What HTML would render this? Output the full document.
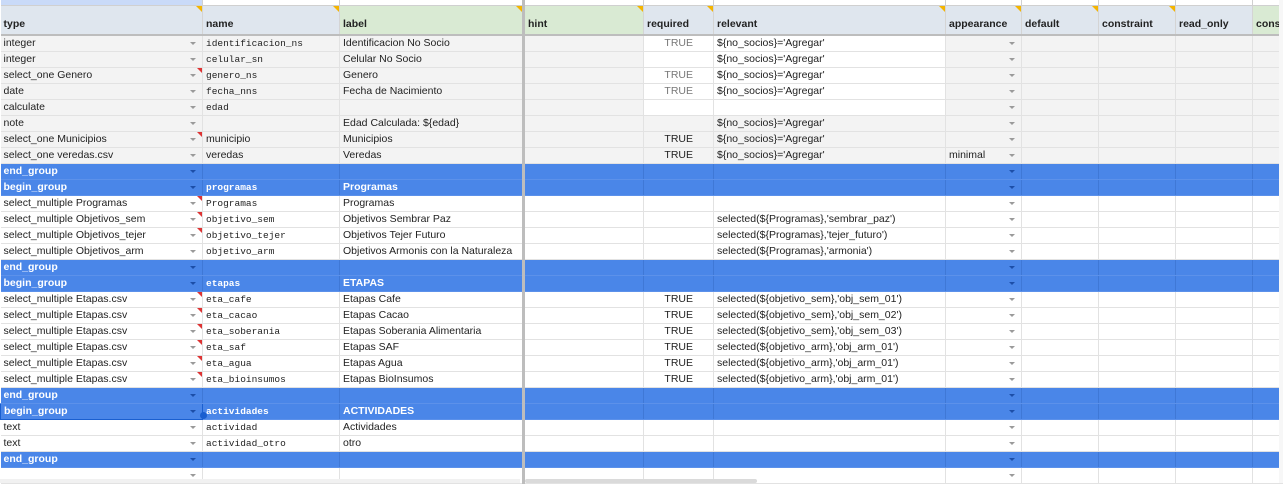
<!DOCTYPE html>
<html><head><meta charset="utf-8"><style>
*{margin:0;padding:0;box-sizing:border-box}
body{width:1283px;height:483px;overflow:hidden;background:#fff;font-family:"Liberation Sans",Arial,sans-serif;font-size:10.5px;color:#222;position:relative}
table{border-collapse:collapse;table-layout:fixed;position:absolute;left:0;top:0;width:1290px}
td{height:16px;border-right:1px solid #e2e2e2;border-bottom:1px solid #e2e2e2;padding:0 3px;white-space:nowrap;overflow:hidden;position:relative;line-height:15px;vertical-align:bottom}
tr.top td{height:5px;border-bottom:1px solid #d0d0d0;border-right:1px solid #d0d0d0}
tr.hd td{height:30px;font-weight:bold;background:#dfe6ee;padding-bottom:2px;border-bottom:2px solid #bdbdbd;border-right:1px solid #d4d4d4}
tr.hd td.g{background:#d9ead3}
tr.g td{background:#f3f3f3}
tr.g td.w{background:#fff}
tr.b td{background:#4a86e8;color:#fff;font-weight:bold;border-right:1px solid #3f78d6;border-bottom:1px solid #5c91ea}
td.dv{border-right:3px solid #bdbdbd!important}
.m{font-family:"Liberation Mono",monospace;font-size:9.5px}
tr.b .m{font-weight:bold}
.ar::after{content:"";position:absolute;right:6px;top:6px;border-left:3px solid transparent;border-right:3px solid transparent;border-top:3px solid #9a9a9a}
tr.b .ar::after{border-top-color:#1c4ea8}
.rc::before{content:"";position:absolute;right:0;top:0;border-top:5px solid #d33;border-left:5px solid transparent}
.oc::before{content:"";position:absolute;right:0;top:0;border-top:6px solid #f4b400;border-left:6px solid transparent}
.r{text-align:right;padding-right:20px}
.gr{color:#777}
</style></head><body>
<table>
<colgroup><col style="width:202px"><col style="width:137px"><col style="width:184px"><col style="width:120px"><col style="width:70px"><col style="width:232px"><col style="width:76px"><col style="width:77px"><col style="width:77px"><col style="width:77px"><col style="width:38px"></colgroup>
<tr class="top"><td style="background:#c9daf8"></td><td></td><td class="dv"></td><td></td><td></td><td></td><td></td><td></td><td></td><td></td><td></td></tr>
<tr class="hd"><td class="oc">type</td><td class="oc">name</td><td class="g dv oc">label</td><td class="g oc">hint</td><td class="oc">required</td><td class="oc">relevant</td><td class="oc">appearance</td><td class="oc">default</td><td class="oc">constraint</td><td>read_only</td><td class="g">const</td></tr>
<tr class="g"><td class="ar">integer</td><td class="m">identificacion_ns</td><td class="dv">Identificacion No Socio</td><td></td><td class="w r gr">TRUE</td><td class="w">${no_socios}='Agregar'</td><td class="ar"></td><td></td><td></td><td></td><td></td></tr>
<tr class="g"><td class="ar">integer</td><td class="m">celular_sn</td><td class="dv">Celular No Socio</td><td></td><td class="w"></td><td class="w">${no_socios}='Agregar'</td><td class="ar"></td><td></td><td></td><td></td><td></td></tr>
<tr class="g"><td class="ar rc">select_one Genero</td><td class="m">genero_ns</td><td class="dv">Genero</td><td></td><td class="w r gr">TRUE</td><td class="w">${no_socios}='Agregar'</td><td class="ar"></td><td></td><td></td><td></td><td></td></tr>
<tr class="g"><td class="ar">date</td><td class="m">fecha_nns</td><td class="dv">Fecha de Nacimiento</td><td></td><td class="w r gr">TRUE</td><td class="w">${no_socios}='Agregar'</td><td class="ar"></td><td></td><td></td><td></td><td></td></tr>
<tr class="g"><td class="ar">calculate</td><td class="m">edad</td><td class="dv"></td><td></td><td class="w"></td><td class="w"></td><td class="ar"></td><td></td><td></td><td></td><td></td></tr>
<tr class="g"><td class="ar">note</td><td></td><td class="dv">Edad Calculada: ${edad}</td><td></td><td></td><td>${no_socios}='Agregar'</td><td class="ar"></td><td></td><td></td><td></td><td></td></tr>
<tr class="g"><td class="ar rc">select_one Municipios</td><td>municipio</td><td class="dv">Municipios</td><td></td><td class="r">TRUE</td><td>${no_socios}='Agregar'</td><td class="ar"></td><td></td><td></td><td></td><td></td></tr>
<tr class="g"><td class="ar">select_one veredas.csv</td><td>veredas</td><td class="dv">Veredas</td><td></td><td class="r">TRUE</td><td>${no_socios}='Agregar'</td><td class="ar">minimal</td><td></td><td></td><td></td><td></td></tr>
<tr class="b"><td class="ar">end_group</td><td></td><td class="dv"></td><td></td><td></td><td></td><td class="ar"></td><td></td><td></td><td></td><td></td></tr>
<tr class="b"><td class="ar">begin_group</td><td class="m">programas</td><td class="dv">Programas</td><td></td><td></td><td></td><td class="ar"></td><td></td><td></td><td></td><td></td></tr>
<tr><td class="ar rc">select_multiple Programas</td><td class="m">Programas</td><td class="dv">Programas</td><td></td><td></td><td></td><td class="ar"></td><td></td><td></td><td></td><td></td></tr>
<tr><td class="ar rc">select_multiple Objetivos_sem</td><td class="m">objetivo_sem</td><td class="dv">Objetivos Sembrar Paz</td><td></td><td></td><td>selected(${Programas},'sembrar_paz')</td><td class="ar"></td><td></td><td></td><td></td><td></td></tr>
<tr><td class="ar rc">select_multiple Objetivos_tejer</td><td class="m">objetivo_tejer</td><td class="dv">Objetivos Tejer Futuro</td><td></td><td></td><td>selected(${Programas},'tejer_futuro')</td><td class="ar"></td><td></td><td></td><td></td><td></td></tr>
<tr><td class="ar">select_multiple Objetivos_arm</td><td class="m">objetivo_arm</td><td class="dv">Objetivos Armonis con la Naturaleza</td><td></td><td></td><td>selected(${Programas},'armonia')</td><td class="ar"></td><td></td><td></td><td></td><td></td></tr>
<tr class="b"><td class="ar">end_group</td><td></td><td class="dv"></td><td></td><td></td><td></td><td class="ar"></td><td></td><td></td><td></td><td></td></tr>
<tr class="b"><td class="ar">begin_group</td><td class="m">etapas</td><td class="dv">ETAPAS</td><td></td><td></td><td></td><td class="ar"></td><td></td><td></td><td></td><td></td></tr>
<tr><td class="ar rc">select_multiple Etapas.csv</td><td class="m">eta_cafe</td><td class="dv">Etapas Cafe</td><td></td><td class="r">TRUE</td><td>selected(${objetivo_sem},'obj_sem_01')</td><td class="ar"></td><td></td><td></td><td></td><td></td></tr>
<tr><td class="ar rc">select_multiple Etapas.csv</td><td class="m">eta_cacao</td><td class="dv">Etapas Cacao</td><td></td><td class="r">TRUE</td><td>selected(${objetivo_sem},'obj_sem_02')</td><td class="ar"></td><td></td><td></td><td></td><td></td></tr>
<tr><td class="ar rc">select_multiple Etapas.csv</td><td class="m">eta_soberania</td><td class="dv">Etapas Soberania Alimentaria</td><td></td><td class="r">TRUE</td><td>selected(${objetivo_sem},'obj_sem_03')</td><td class="ar"></td><td></td><td></td><td></td><td></td></tr>
<tr><td class="ar rc">select_multiple Etapas.csv</td><td class="m">eta_saf</td><td class="dv">Etapas SAF</td><td></td><td class="r">TRUE</td><td>selected(${objetivo_arm},'obj_arm_01')</td><td class="ar"></td><td></td><td></td><td></td><td></td></tr>
<tr><td class="ar rc">select_multiple Etapas.csv</td><td class="m">eta_agua</td><td class="dv">Etapas Agua</td><td></td><td class="r">TRUE</td><td>selected(${objetivo_arm},'obj_arm_01')</td><td class="ar"></td><td></td><td></td><td></td><td></td></tr>
<tr><td class="ar rc">select_multiple Etapas.csv</td><td class="m">eta_bioinsumos</td><td class="dv">Etapas BioInsumos</td><td></td><td class="r">TRUE</td><td>selected(${objetivo_arm},'obj_arm_01')</td><td class="ar"></td><td></td><td></td><td></td><td></td></tr>
<tr class="b"><td class="ar">end_group</td><td></td><td class="dv"></td><td></td><td></td><td></td><td class="ar"></td><td></td><td></td><td></td><td></td></tr>
<tr class="b"><td class="ar" style="border:1px solid #1a5fd0">begin_group</td><td class="m">actividades</td><td class="dv">ACTIVIDADES</td><td></td><td></td><td></td><td class="ar"></td><td></td><td></td><td></td><td></td></tr>
<tr><td class="ar">text</td><td class="m">actividad</td><td class="dv">Actividades</td><td></td><td></td><td></td><td class="ar"></td><td></td><td></td><td></td><td></td></tr>
<tr><td class="ar">text</td><td class="m">actividad_otro</td><td class="dv">otro</td><td></td><td></td><td></td><td class="ar"></td><td></td><td></td><td></td><td></td></tr>
<tr class="b"><td class="ar">end_group</td><td></td><td class="dv"></td><td></td><td></td><td></td><td class="ar"></td><td></td><td></td><td></td><td></td></tr>
<tr><td class="ar"></td><td></td><td class="dv"></td><td></td><td></td><td></td><td class="ar"></td><td></td><td></td><td></td><td></td></tr>
</table>
<div style="position:absolute;left:200px;top:412px;width:7px;height:7px;border-radius:50%;background:#1a5fd0"></div>
<div style="position:absolute;left:0;top:479px;width:520px;height:4px;background:#f1f1f1"></div>
<div style="position:absolute;left:525px;top:479px;width:232px;height:4px;background:#dadada;border-radius:3px"></div>
<div style="position:absolute;left:1279px;top:0;width:4px;height:483px;background:#f7f7f7"></div>
</body></html>
